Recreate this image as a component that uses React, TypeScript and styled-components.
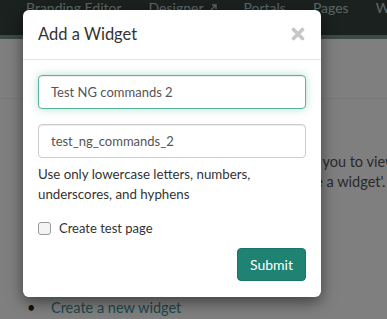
import React from "react";
import styled, { createGlobalStyle } from "styled-components";

const GlobalStyle = createGlobalStyle`
  html, body {
    margin: 0;
    padding: 0;
    width: 387px;
    height: 319px;
    overflow: hidden;
    background: #fff;
    font-family: "Lato", "Open Sans", sans-serif;
  }
  * { box-sizing: border-box; }
`;

const Page = styled.div`
  position: relative;
  width: 387px;
  height: 319px;
  overflow: hidden;
  background: #fff;
`;

const NavBar = styled.div`
  height: 39px;
  background: #36433f;
  display: flex;
  align-items: flex-start;
  padding-left: 26px;
  gap: 27px;
  white-space: nowrap;
  overflow: hidden;
  border-bottom: 4px solid #7b9389;
`;

const NavItem = styled.span`
  margin-top: -2px;
  font-size: 14px;
  line-height: 20px;
  color: #b6cccb;
  display: flex;
  align-items: center;
  gap: 5px;
`;

const PageHeader = styled.div`
  height: 60px;
  border-bottom: 1px solid #efefef;
`;

const Para = styled.div`
  margin-top: 53px;
  font-size: 14.5px;
  line-height: 20px;
  color: #555;
  white-space: nowrap;
`;

const ParaLine = styled.div<{ $indent: number }>`
  padding-left: ${(p) => p.$indent}px;
`;

const List = styled.ul`
  margin: 106px 0 0;
  padding-left: 27px;
  list-style: none;
  font-size: 14.5px;
  line-height: 20px;
  color: #3a8f98;
`;

const ListItem = styled.li`
  display: flex;
  &::before {
    content: "•";
    width: 24px;
    color: #222;
  }
`;

const Overlay = styled.div`
  position: absolute;
  inset: 0;
  background: rgba(0, 0, 0, 0.5);
`;

const Modal = styled.div`
  position: absolute;
  left: 23px;
  top: 10px;
  width: 298px;
  background: #fff;
  border-radius: 6px;
  box-shadow: 0 5px 15px rgba(0, 0, 0, 0.5);
`;

const Header = styled.div`
  height: 50px;
  display: flex;
  align-items: center;
  justify-content: space-between;
  padding: 0 16px 1px 15px;
  border-bottom: 1px solid #e5e5e5;
`;

const Title = styled.h4`
  margin: 0;
  font-size: 16.5px;
  font-weight: 400;
  color: #333;
`;

const Close = styled.button`
  border: 0;
  background: none;
  padding: 0;
  width: 14px;
  height: 14px;
  display: flex;
  cursor: pointer;
`;

const Body = styled.div`
  padding: 15px 15px 16px;
  display: flex;
  flex-direction: column;
`;

const Input = styled.input<{ $focused?: boolean }>`
  width: 100%;
  height: 34px;
  padding: 0 12px;
  border-radius: 4px;
  font-family: inherit;
  font-size: 13px;
  color: #555;
  outline: none;
  border: 1px solid ${(p) => (p.$focused ? "#57b39c" : "#ccc")};
  box-shadow: ${(p) =>
    p.$focused
      ? "inset 0 1px 1px rgba(0,0,0,.075), 0 0 8px rgba(87,179,156,.45)"
      : "inset 0 1px 1px rgba(0,0,0,.075)"};
  margin-bottom: 15px;
`;

const Help = styled.p`
  margin: -9px 0 0;
  font-size: 13.3px;
  line-height: 20px;
  color: #333;
`;

const CheckRow = styled.label`
  margin-top: 16px;
  display: flex;
  align-items: center;
  gap: 8px;
  font-size: 13px;
  color: #333;
`;

const Box = styled.span`
  width: 13px;
  height: 13px;
  border: 1px solid #9a9a9a;
  border-radius: 3px;
  background: #f4f4f4;
`;

const Footer = styled.div`
  margin-top: 12px;
  display: flex;
  justify-content: flex-end;
`;

const Submit = styled.button`
  height: 33px;
  padding: 0 12px;
  border: 1px solid #1b7466;
  border-radius: 4px;
  background: #1f8272;
  color: #fff;
  font-family: inherit;
  font-size: 14px;
  cursor: pointer;
`;

export default function App() {
  return (
    <>
      <GlobalStyle />
      <Page>
        <NavBar>
          <NavItem>Branding Editor</NavItem>
          <NavItem>
            Designer
            <svg width="8" height="8" viewBox="0 0 8 8">
              <path d="M1 7 L7 1 M3 1 H7 V5" stroke="#b6cccb" strokeWidth="1.4" fill="none" />
            </svg>
          </NavItem>
          <NavItem>Portals</NavItem>
          <NavItem>Pages</NavItem>
          <NavItem>Widgets</NavItem>
        </NavBar>
        <PageHeader />
        <Para>
          <ParaLine $indent={92}>Widgets are reusable blocks that let you to view</ParaLine>
          <ParaLine $indent={80}>and edit content. To start, click 'Create a widget'.</ParaLine>
        </Para>
        <List>
          <ListItem>Create a new widget</ListItem>
        </List>
        <Overlay />
        <Modal>
          <Header>
            <Title>Add a Widget</Title>
            <Close aria-label="Close">
              <svg width="14" height="14" viewBox="0 0 14 14">
                <path
                  d="M2.5 2.5 L11.5 11.5 M11.5 2.5 L2.5 11.5"
                  stroke="#c7c7c7"
                  strokeWidth="3.6"
                  strokeLinecap="round"
                />
              </svg>
            </Close>
          </Header>
          <Body>
            <Input $focused defaultValue="Test NG commands 2" />
            <Input defaultValue="test_ng_commands_2" />
            <Help>Use only lowercase letters, numbers, underscores, and hyphens</Help>
            <CheckRow>
              <Box />
              Create test page
            </CheckRow>
            <Footer>
              <Submit>Submit</Submit>
            </Footer>
          </Body>
        </Modal>
      </Page>
    </>
  );
}
